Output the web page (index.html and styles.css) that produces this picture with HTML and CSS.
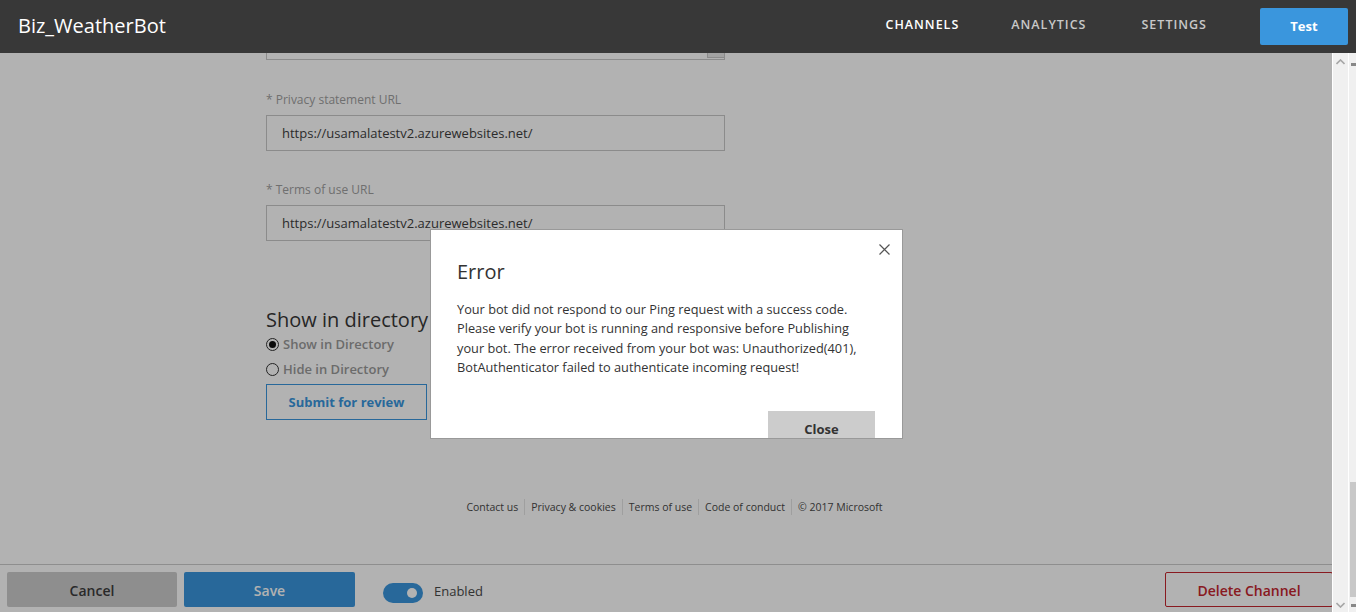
FILE: index.html
```html
<!DOCTYPE html>
<html>
<head>
	<title>Biz_WeatherBot - Channels</title>
	<meta http-equiv="content-type" content="text/html; charset=utf-8" />
	<link rel="stylesheet" href="styles.css">
</head>
<body>
	<div class="topbar">
		<div class="botname">Biz_WeatherBot</div>
		<div class="nav">
			<a class="active">CHANNELS</a>
			<a class="wide">ANALYTICS</a>
			<a>SETTINGS</a>
			<button class="btn-test">Test</button>
		</div>
	</div>

	<div class="frame">
		<div class="main">
			<div class="scroller">
				<div class="form">
					<div class="textarea-end"><span class="ta-scroll"></span></div>

					<p class="lbl first">* Privacy statement URL</p>
					<div class="field">https://usamalatestv2.azurewebsites.net/</div>

					<p class="lbl">* Terms of use URL</p>
					<div class="field">https://usamalatestv2.azurewebsites.net/</div>

					<h2 class="section">Show in directory</h2>
					<div class="radio checked"><span class="dot"></span>Show in Directory</div>
					<div class="radio"><span class="dot"></span>Hide in Directory</div>
					<button class="btn-outline">Submit for review</button>
				</div>

				<div class="footer">
					<a>Contact us</a>
					<a>Privacy &amp; cookies</a>
					<a>Terms of use</a>
					<a>Code of conduct</a>
					<span>&copy; 2017 Microsoft</span>
				</div>
			</div>

			<div class="actions">
				<button class="btn btn-grey">Cancel</button>
				<button class="btn btn-blue">Save</button>
				<span class="toggle"><span class="knob"></span></span>
				<span class="toggle-lbl">Enabled</span>
				<button class="btn btn-danger">Delete Channel</button>
			</div>

			<div class="dim"></div>

			<div class="modal">
				<svg class="close-x" width="11" height="11" viewBox="0 0 11 11"><path d="M0.5 0.5L10.5 10.5M10.5 0.5L0.5 10.5" stroke="#555" stroke-width="1.2" fill="none"/></svg>
				<h3>Error</h3>
				<p>Your bot did not respond to our Ping request with a success code. Please verify your bot is running and responsive before Publishing your bot. The error received from your bot was: Unauthorized(401), BotAuthenticator failed to authenticate incoming request!</p>
				<div class="modal-foot">
					<button class="btn-close">Close</button>
				</div>
			</div>
		</div>

		<div class="vscroll inner">
			<svg width="9" height="6" viewBox="0 0 9 6"><path d="M0.5 5L4.5 1L8.5 5" stroke="#a6a6a6" stroke-width="1.6" fill="none"/></svg>
			<svg width="9" height="6" viewBox="0 0 9 6"><path d="M0.5 1L4.5 5L8.5 1" stroke="#a6a6a6" stroke-width="1.6" fill="none"/></svg>
		</div>
		<div class="vscroll outer">
			<span class="arrow-up"></span>
			<span class="thumb"></span>
			<span class="arrow-down"></span>
		</div>
	</div>
</body>
</html>
```

FILE: styles.css
```css
* {
	box-sizing:border-box;
}

html, body {
	margin:0;
	padding:0;
	height:100%;
	overflow:hidden;
}

body {
	font-family:"Open Sans", "Noto Sans", sans-serif;
	background:#fff;
	color:#3c3c3c;
}

button {
	font-family:inherit;
	cursor:pointer;
}

p {
	margin:0;
}

/* top bar */

.topbar {
	height:53px;
	background:#383838;
	display:flex;
	align-items:center;
	justify-content:space-between;
}

.botname {
	color:#fff;
	font-size:20px;
	padding-left:18px;
	padding-bottom:2px;
}

.nav {
	display:flex;
	align-items:center;
	height:100%;
}

.nav a {
	color:#c8c8c8;
	font-size:12.5px;
	font-weight:600;
	letter-spacing:1px;
	padding:0 26px;
	margin-bottom:5px;
}

.nav a.active {
	color:#fff;
}

.nav a.wide {
	margin-right:3px;
}

.btn-test {
	width:88px;
	height:37px;
	margin:0 8px 0 27px;
	background:#3a96dd;
	border:none;
	border-radius:2px;
	color:#fff;
	font-size:13px;
	font-weight:700;
	padding-bottom:2px;
}

/* frame with fake scrollbars */

.frame {
	display:flex;
	height:559px;
}

.main {
	position:relative;
	width:1332px;
	height:100%;
	display:flex;
	flex-direction:column;
	overflow:hidden;
}

.scroller {
	flex:1;
	overflow:hidden;
}

.form {
	width:459px;
	margin-left:266px;
}

.textarea-end {
	position:relative;
	height:7px;
	border:1px solid #c8c8c8;
	border-top:none;
}

.ta-scroll {
	position:absolute;
	right:0;
	top:0;
	width:17px;
	height:5px;
	background:#e8e8e8;
	border-left:1px solid #c8c8c8;
	border-bottom:1px solid #c8c8c8;
}

.lbl {
	font-size:12px;
	line-height:16px;
	color:#a0a0a0;
	margin-top:31px;
}

.lbl.first {
	margin-top:32px;
}

.field {
	height:36px;
	margin-top:7px;
	border:1px solid #c8c8c8;
	padding-left:15px;
	font-size:13px;
	line-height:34px;
	color:#3e3e3e;
}

.section {
	font-size:20px;
	font-weight:400;
	line-height:28px;
	color:#373737;
	margin:65px 0 0 0;
}

.radio {
	display:flex;
	align-items:center;
	height:20px;
	margin-bottom:5px;
	font-size:13px;
	font-weight:600;
	color:#9a9a9a;
}

.radio .dot {
	width:13px;
	height:13px;
	border:1px solid #333;
	border-radius:50%;
	margin-right:4px;
	position:relative;
}

.radio.checked .dot:after {
	content:"";
	position:absolute;
	left:2px;
	top:2px;
	width:7px;
	height:7px;
	border-radius:50%;
	background:#111;
}

.btn-outline {
	width:161px;
	height:36px;
	background:#fff;
	border:1px solid #3a96dd;
	color:#3a96dd;
	font-size:13px;
	font-weight:700;
}

.footer {
	display:flex;
	justify-content:center;
	padding-left:17px;
	margin-top:79px;
	font-size:10.5px;
	line-height:16px;
	color:#494949;
}

.footer a, .footer span {
	padding:0 6px;
	border-left:1px solid #e4e4e4;
}

.footer a:first-child {
	border-left:none;
}

/* action bar */

.actions {
	height:48px;
	border-top:1px solid #ccc;
	display:flex;
	align-items:flex-start;
	padding:7px 0 0 7px;
}

.btn {
	height:35px;
	border:none;
	border-radius:2px;
	font-size:14px;
	font-weight:600;
	padding-top:2px;
}

.btn-grey {
	width:170px;
	background:#ccc;
	color:#3c3c3c;
}

.btn-blue {
	width:171px;
	margin-left:7px;
	background:#3a96dd;
	color:#fff;
}

.toggle {
	position:relative;
	width:40px;
	height:20px;
	margin:11px 0 0 28px;
	border-radius:10px;
	background:#3a96dd;
}

.knob {
	position:absolute;
	right:6px;
	top:5px;
	width:10px;
	height:10px;
	border-radius:50%;
	background:#fff;
}

.toggle-lbl {
	margin:10px 0 0 11px;
	font-size:13px;
	color:#494949;
}

.btn-danger {
	margin-left:auto;
	margin-right:-1px;
	width:168px;
	background:#fff;
	border:1px solid #c4262e;
	color:#c4262e;
	font-weight:600;
}

.dim {
	position:absolute;
	left:0;
	top:0;
	right:0;
	bottom:0;
	background:rgba(0,0,0,0.3);
}

/* modal */

.modal {
	position:absolute;
	top:176px;
	left:430px;
	width:473px;
	height:210px;
	background:#fff;
	border:1px solid #999;
	padding:28px 26px 0 26px;
	overflow:hidden;
}

.close-x {
	position:absolute;
	right:12px;
	top:14px;
}

.modal h3 {
	margin:0;
	font-size:20px;
	font-weight:400;
	line-height:28px;
	color:#333;
}

.modal p {
	margin-top:14px;
	font-size:12.75px;
	line-height:19.3px;
	color:#333;
}

.modal-foot {
	display:flex;
	justify-content:flex-end;
	margin-top:34px;
	padding-right:1px;
}

.btn-close {
	width:107px;
	height:36px;
	background:#ccc;
	border:none;
	color:#333;
	font-size:13px;
	font-weight:700;
}

/* scrollbars */

.vscroll {
	background:#f0f0f0;
	border-left:1px solid #fff;
}

.vscroll.inner {
	width:16px;
	display:flex;
	flex-direction:column;
	justify-content:space-between;
	align-items:center;
	padding:6px 0 4px 0;
}

.vscroll.outer {
	position:relative;
	width:8px;
}

.thumb {
	position:absolute;
	left:1px;
	right:0;
	top:429px;
	height:115px;
	background:#c8c8c8;
}

.arrow-up, .arrow-down {
	position:absolute;
	left:2px;
	width:5px;
	height:3px;
	background:#888;
}

.arrow-up {
	top:10px;
}

.arrow-down {
	bottom:5px;
}
```
